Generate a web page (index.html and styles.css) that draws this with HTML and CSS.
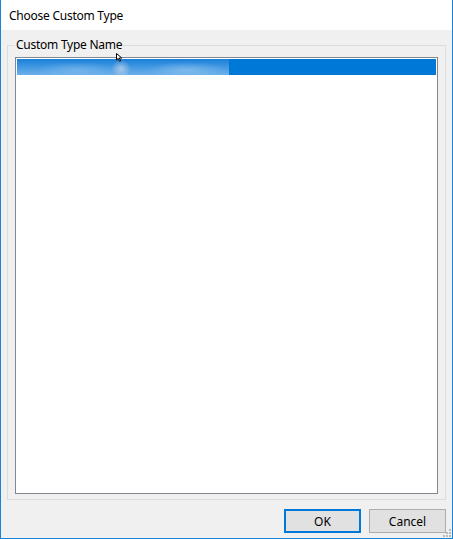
FILE: index.html
```html
<!DOCTYPE html>
<html lang="en">
<head>
  <meta charset="UTF-8">
  <meta name="viewport" content="width=device-width, initial-scale=1.0">
  <title>Choose Custom Type</title>
  <link rel="stylesheet" href="styles.css">
</head>
<body>
  <div class="window">
    <div class="title-bar">Choose Custom Type</div>

    <!-- Custom type list -->
    <fieldset class="group-box">
      <legend>Custom Type Name</legend>
      <div class="list-box">
        <div class="list-item selected">
          <span class="item-text"></span>
        </div>
      </div>
      <svg class="cursor" width="7" height="9" viewBox="0 0 7 9">
        <path d="M0.5 0.5 L0.5 7 L2.2 5.4 L3.6 8.4 L4.6 8 L3.3 5 L5.8 5 Z" fill="#fff" stroke="#000" stroke-width="1"/>
      </svg>
    </fieldset>

    <div class="button-row">
      <button class="btn default">OK</button>
      <button class="btn">Cancel</button>
    </div>

    <svg class="size-grip" width="9" height="9" viewBox="0 0 9 9">
      <rect x="7" y="1" width="2" height="2" fill="#bcbcbc"/>
      <rect x="4" y="4" width="2" height="2" fill="#bcbcbc"/>
      <rect x="7" y="4" width="2" height="2" fill="#bcbcbc"/>
      <rect x="1" y="7" width="2" height="2" fill="#bcbcbc"/>
      <rect x="4" y="7" width="2" height="2" fill="#bcbcbc"/>
      <rect x="7" y="7" width="2" height="2" fill="#bcbcbc"/>
    </svg>
  </div>
</body>
</html>
```

FILE: styles.css
```css
body {
  margin: 0;
  font-family: "Noto Sans", Arial, sans-serif;
  font-size: 12px;
  letter-spacing: -0.25px;
  color: #000;
  background: #f0f0f0;
}
.window {
  position: relative;
  height: 539px;
  box-sizing: border-box;
  border: 1px solid #1883d7;
  border-top: none;
  background: #f0f0f0;
  display: flex;
  flex-direction: column;
}
.title-bar {
  height: 30px;
  line-height: 31px;
  padding-left: 8px;
  background: #fff;
}

/* Group box */
.group-box {
  position: relative;
  margin: 7px 6px 0 6px;
  padding: 0 7px 5px 7px;
  border: 1px solid #dcdcdc;
  min-width: 0;
}
.group-box legend {
  padding: 0 1px;
  margin-left: 0;
  line-height: 16px;
}
.list-box {
  margin-top: 4px;
  height: 433px;
  padding: 1px;
  border: 1px solid #828790;
  background: #fff;
}
.list-item {
  height: 16px;
}
.list-item.selected {
  background: #0078d7;
}
.item-text {
  display: block;
  width: 212px;
  height: 16px;
  background:
    radial-gradient(ellipse 10px 9px at 104px 10px, rgba(190, 210, 230, 0.8), rgba(190, 210, 230, 0)),
    radial-gradient(ellipse 40px 8px at 60px 11px, rgba(140, 195, 240, 0.5), rgba(140, 195, 240, 0)),
    radial-gradient(ellipse 40px 8px at 170px 11px, rgba(150, 200, 240, 0.6), rgba(150, 200, 240, 0)),
    linear-gradient(to bottom, #1a80d9 0%, #3a93e0 40%, #6cb0ea 100%);
}
.cursor {
  position: absolute;
  left: 108px;
  top: 0;
}

/* Buttons */
.button-row {
  display: flex;
  justify-content: flex-end;
  gap: 8px;
  margin: 9px 6px 0 0;
}
.btn {
  width: 77px;
  height: 24px;
  padding: 0;
  font-family: "Noto Sans", Arial, sans-serif;
  font-size: 12px;
  color: #000;
  background: #e1e1e1;
  border: 1px solid #adadad;
  border-radius: 0;
}
.btn.default {
  border: 2px solid #0078d7;
}
.size-grip {
  position: absolute;
  right: 1px;
  bottom: 1px;
}
```
